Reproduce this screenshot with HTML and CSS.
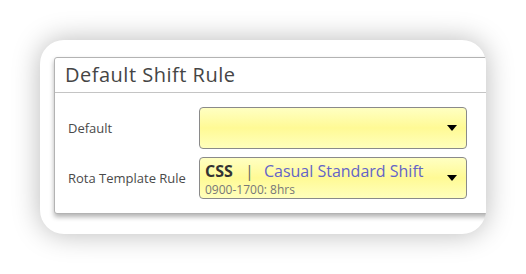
FILE: index.html
```html
<!DOCTYPE html>
<html lang="en">
<head>
    <meta charset="UTF-8">
    <meta name="viewport" content="width=device-width, initial-scale=1.0">
    <title>Default Shift Rule</title>
    <link rel="stylesheet" href="styles.css">
</head>
<body>
    <div class="card">
        <div class="panel">
            <div class="panel-heading">Default Shift Rule</div>
            <div class="panel-body">
                <div class="row">
                    <label class="row-label">Default</label>
                    <div class="picker">
                        <div class="picker-value"></div>
                        <span class="caret"></span>
                    </div>
                </div>
                <div class="row">
                    <label class="row-label">Rota Template Rule</label>
                    <div class="picker">
                        <div class="picker-value">
                            <div class="shift-line">
                                <span class="shift-code">CSS</span>
                                <span class="shift-sep">|</span>
                                <span class="shift-name">Casual Standard Shift</span>
                            </div>
                            <div class="shift-time">0900-1700: 8hrs</div>
                        </div>
                        <span class="caret"></span>
                    </div>
                </div>
            </div>
        </div>
    </div>
</body>
</html>
```

FILE: styles.css
```css
body {
    margin: 0;
    padding: 40px;
    background-color: #fff;
    font-family: 'Open Sans', sans-serif;
    color: #444;
}

.card {
    width: 446px;
    height: 194px;
    box-sizing: border-box;
    padding: 17px 0 0 14px;
    background-color: #fff;
    border-radius: 24px;
    box-shadow: 0 0 28px rgba(0, 0, 0, 0.28);
    overflow: hidden;
}

.panel {
    width: 470px;
    height: 157px;
    box-sizing: border-box;
    border: 1px solid #b3b3b3;
    border-radius: 3px;
    background-color: #fff;
    box-shadow: 0 3px 5px rgba(0, 0, 0, 0.3);
}

.panel-heading {
    height: 35px;
    box-sizing: border-box;
    padding: 3px 0 0 10px;
    border-bottom: 1px solid #c4c4c4;
    font-size: 20px;
    letter-spacing: 0.5px;
    line-height: 28px;
    color: #454545;
}

.panel-body {
    padding: 14px 0 0 13px;
    display: flex;
    flex-direction: column;
    gap: 8px;
}

.row {
    display: flex;
    align-items: center;
}

.row-label {
    width: 131px;
    font-size: 13px;
    color: #4a4a4a;
}

.picker {
    width: 268px;
    height: 42px;
    box-sizing: border-box;
    display: flex;
    align-items: center;
    padding: 0 9px 0 5px;
    border: 1px solid #8a8a8a;
    border-radius: 4px;
    background: linear-gradient(to bottom, #ffffc2 0%, #fffa95 50%, #ffffbc 100%);
}

.picker-value {
    flex: 1;
}

.shift-line {
    font-size: 16px;
    line-height: 22px;
}

.shift-code {
    font-weight: bold;
    color: #333;
}

.shift-sep {
    color: #666;
    margin: 0 6px 0 8px;
}

.shift-name {
    color: #6464c8;
}

.shift-time {
    font-size: 12px;
    line-height: 15px;
    color: #777;
}

.caret {
    width: 0;
    height: 0;
    border-left: 5px solid transparent;
    border-right: 5px solid transparent;
    border-top: 6px solid #000;
}
```
